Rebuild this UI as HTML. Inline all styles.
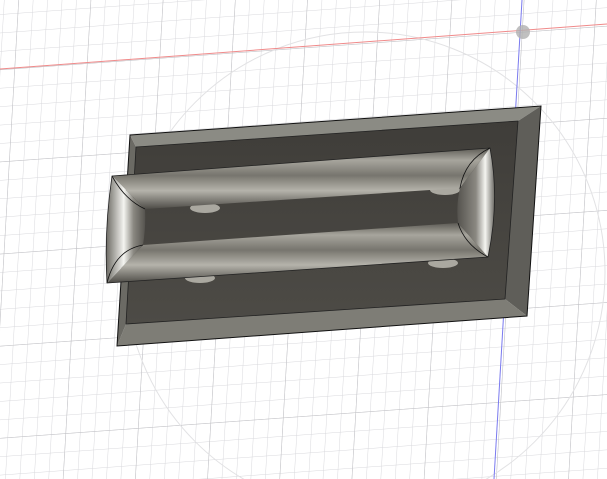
<!DOCTYPE html>
<html><head><style>html,body{margin:0;padding:0;background:#fff;overflow:hidden;width:607px;height:479px}svg{display:block}</style></head>
<body>
<svg width="607" height="479" viewBox="0 0 607 479" xmlns="http://www.w3.org/2000/svg">
<defs>
<pattern id="g" width="14.5" height="18.5" patternUnits="userSpaceOnUse" patternTransform="matrix(1,-0.072,-0.058,1,522,32)">
<path d="M0 0V18.5M0 0H14.5" stroke="#d8d8dc" stroke-width="1" fill="none"/>
</pattern>
<pattern id="G" width="72.5" height="92.5" patternUnits="userSpaceOnUse" patternTransform="matrix(1,-0.072,-0.058,1,522,32)">
<path d="M0 0V92.5M0 0H72.5" stroke="#c0c0c4" stroke-width="1" fill="none"/>
</pattern>
<linearGradient id="face" x1="0" y1="0" x2="0" y2="1">
<stop offset="0" stop-color="#3f3d39"/><stop offset="1" stop-color="#4d4b46"/></linearGradient>
<linearGradient id="bar" x1="0" y1="0" x2="0" y2="1">
<stop offset="0" stop-color="#5e5c56"/><stop offset="0.2" stop-color="#a7a59d"/><stop offset="0.45" stop-color="#77756e"/><stop offset="0.7" stop-color="#b5b3ab"/><stop offset="1" stop-color="#4e4c47"/></linearGradient>
<linearGradient id="endL" x1="0" y1="0" x2="1" y2="0">
<stop offset="0" stop-color="#6c6a64"/><stop offset="0.45" stop-color="#f4f4f0"/><stop offset="0.7" stop-color="#8a8881"/><stop offset="1" stop-color="#55534e"/></linearGradient>
<linearGradient id="endR" x1="0" y1="0" x2="1" y2="0">
<stop offset="0" stop-color="#55534e"/><stop offset="0.5" stop-color="#8a8881"/><stop offset="0.75" stop-color="#f4f4f0"/><stop offset="1" stop-color="#6c6a64"/></linearGradient>
</defs>
<rect width="607" height="479" fill="#fff"/>
<rect width="607" height="479" fill="url(#g)"/>
<rect width="607" height="479" fill="url(#G)"/>
<circle cx="365" cy="272" r="240" fill="none" stroke="#e2e2e4" stroke-width="1"/>
<line x1="0" y1="69" x2="607" y2="24" stroke="#f08a8a" stroke-width="1"/>
<line x1="522" y1="0" x2="494" y2="479" stroke="#7a7aef" stroke-width="1"/>
<circle cx="523" cy="32" r="7" fill="#b0b0b0" opacity="0.8"/>
<polygon points="130,135 541,106 518,121 136,147" fill="#8b8b84"/>
<polygon points="541,106 527,316 505,299 518,121" fill="#5f5e59"/>
<polygon points="527,316 117,346 126,324 505,299" fill="#7e7d76"/>
<polygon points="117,346 130,135 136,147 126,324" fill="#6b6a64"/>
<polygon points="136,147 518,121 505,299 126,324" fill="url(#face)"/>
<polygon points="130,135 541,106 527,316 117,346" fill="none" stroke="#111" stroke-width="1"/>
<polygon points="136,147 518,121 505,299 126,324" fill="none" stroke="#222" stroke-width="0.8"/>
<ellipse cx="205" cy="208" rx="15" ry="5" fill="#aaa8a0"/>
<ellipse cx="445" cy="190" rx="15" ry="5" fill="#aaa8a0"/>
<ellipse cx="200" cy="278" rx="15" ry="5" fill="#aaa8a0"/>
<ellipse cx="443" cy="263" rx="15" ry="5" fill="#aaa8a0"/>
<polygon points="112,176 490,148 460,188 145,209" fill="url(#bar)"/>
<polygon points="143,245 458,223 488,257 107,283" fill="url(#bar)"/>
<path d="M112,176 Q104,230 107,283 L143,245 Q146,226 145,209 Z" fill="url(#endL)"/>
<path d="M490,148 Q500,200 488,257 L458,223 Q456,205 460,188 Z" fill="url(#endR)"/>
<path d="M112,176 L490,148 Q500,200 488,257 L107,283 Q104,230 112,176 Z" fill="none" stroke="#222" stroke-width="0.8"/>
<path d="M112,176 Q125,200 145,209 M107,283 Q115,250 143,245 M490,148 Q465,160 460,188 M488,257 Q465,245 458,223" fill="none" stroke="#111" stroke-width="0.8"/>
</svg>
</body></html>
